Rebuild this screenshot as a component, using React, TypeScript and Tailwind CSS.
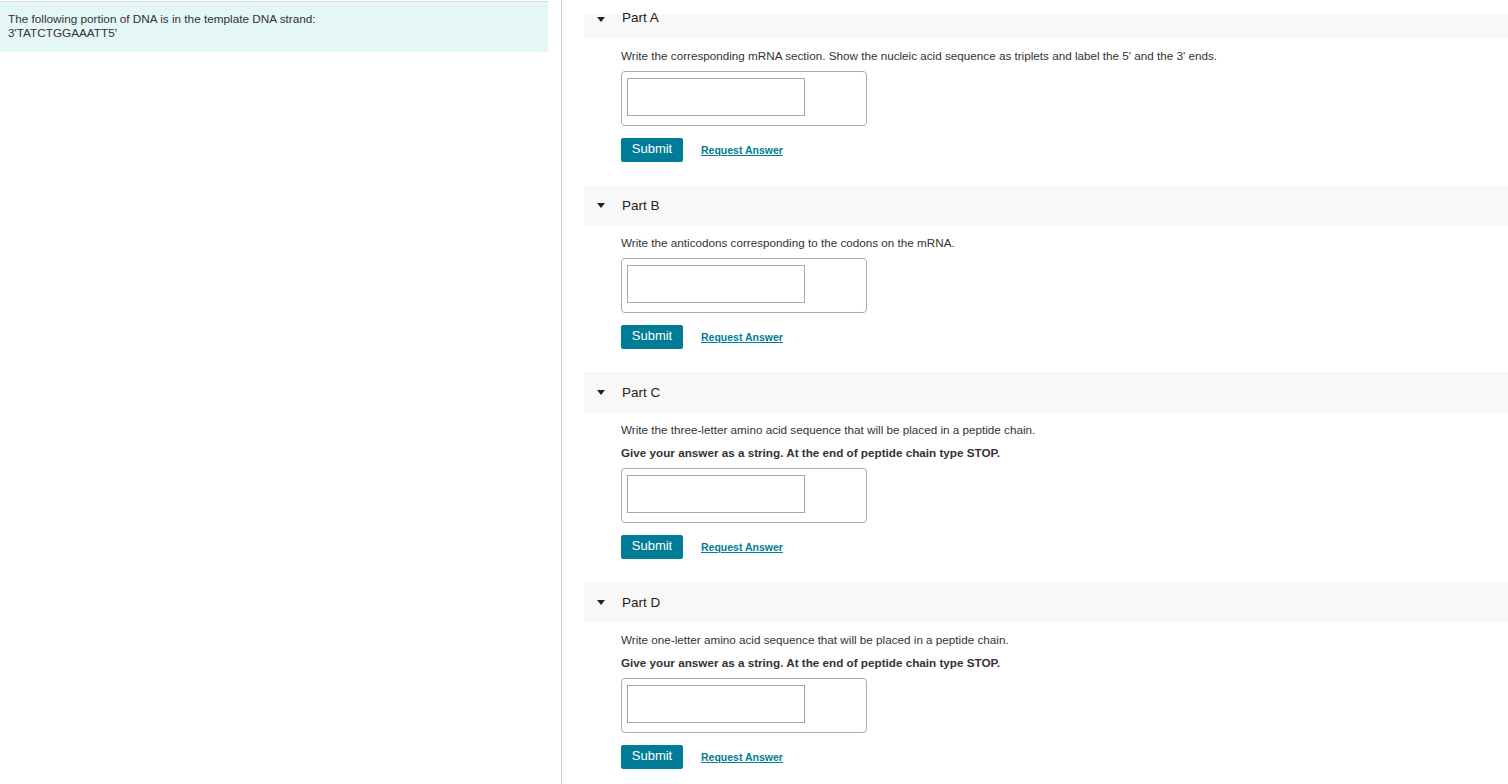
import React from "react";

const Tri = ({ className = "" }: { className?: string }) => (
  <svg width="8" height="5" viewBox="0 0 8 5" className={className}>
    <path d="M0 0 L8 0 L4 5 Z" fill="#222" />
  </svg>
);

const Answer = () => (
  <>
    <div className="mt-[7px] w-[246px] h-[55px] border border-[#ababab] rounded-[4px] pt-[6px] pl-[5px]">
      <div className="w-[178px] h-[38px] border border-[#a6a6a6] bg-white" />
    </div>
    <div className="mt-[12px] flex items-center">
      <button className="w-[62px] h-[24px] bg-[#007c97] rounded-[2px] text-white text-[13px] leading-[16px] pb-[2px]">
        Submit
      </button>
      <a className="ml-[18px] text-[10.5px] font-bold text-[#007c97] underline leading-[14px]" href="#">
        Request Answer
      </a>
    </div>
  </>
);

const Part = ({ label, lines, bold }: { label: string; lines: string; bold?: string }) => (
  <div className="mt-[23px]">
    <div className="h-[41px] bg-[#f8f8f8] flex items-center pl-[13px]">
      <Tri />
      <span className="ml-[17px] text-[13.5px] leading-[16px] text-[#222]">{label}</span>
    </div>
    <div className="pl-[37px]">
      <p className="mt-[9px] text-[11.7px] leading-[16px]">{lines}</p>
      {bold && <p className="mt-[7px] text-[11.7px] leading-[16px] font-bold">{bold}</p>}
      <div className={bold ? "mt-[1px]" : ""}>
        <Answer />
      </div>
    </div>
  </div>
);

export default function App() {
  return (
    <div className="flex h-[784px] overflow-hidden bg-white text-[#333] font-['Liberation_Sans',Arial,sans-serif]">
      <div className="w-[548px] shrink-0 pt-px">
        <div className="border-t border-[#dddddd] bg-[#e5f6f7] pl-2 pt-[10px] pb-[12px] text-[11.75px] leading-[14px]">
          <div>The following portion of DNA is in the template DNA strand:</div>
          <div>3'TATCTGGAAATT5'</div>
        </div>
      </div>
      <div className="ml-[13px] w-px shrink-0 bg-[#bfd2e6]" />
      <div className="flex-1 pl-[22px]">
        <div className="mt-[14px] h-[25px] bg-[#f8f8f8] flex items-start pl-[13px]">
          <Tri className="mt-[3px]" />
          <span className="ml-[17px] -mt-[4px] text-[13.5px] leading-[16px] text-[#222]">Part A</span>
        </div>
        <div className="pl-[37px]">
          <p className="mt-[9px] text-[11.7px] leading-[16px]">
            Write the corresponding mRNA section. Show the nucleic acid sequence as triplets and label the 5' and the 3' ends.
          </p>
          <Answer />
        </div>
        <Part label="Part B" lines="Write the anticodons corresponding to the codons on the mRNA." />
        <Part
          label="Part C"
          lines="Write the three-letter amino acid sequence that will be placed in a peptide chain."
          bold="Give your answer as a string. At the end of peptide chain type STOP."
        />
        <Part
          label="Part D"
          lines="Write one-letter amino acid sequence that will be placed in a peptide chain."
          bold="Give your answer as a string. At the end of peptide chain type STOP."
        />
      </div>
    </div>
  );
}
